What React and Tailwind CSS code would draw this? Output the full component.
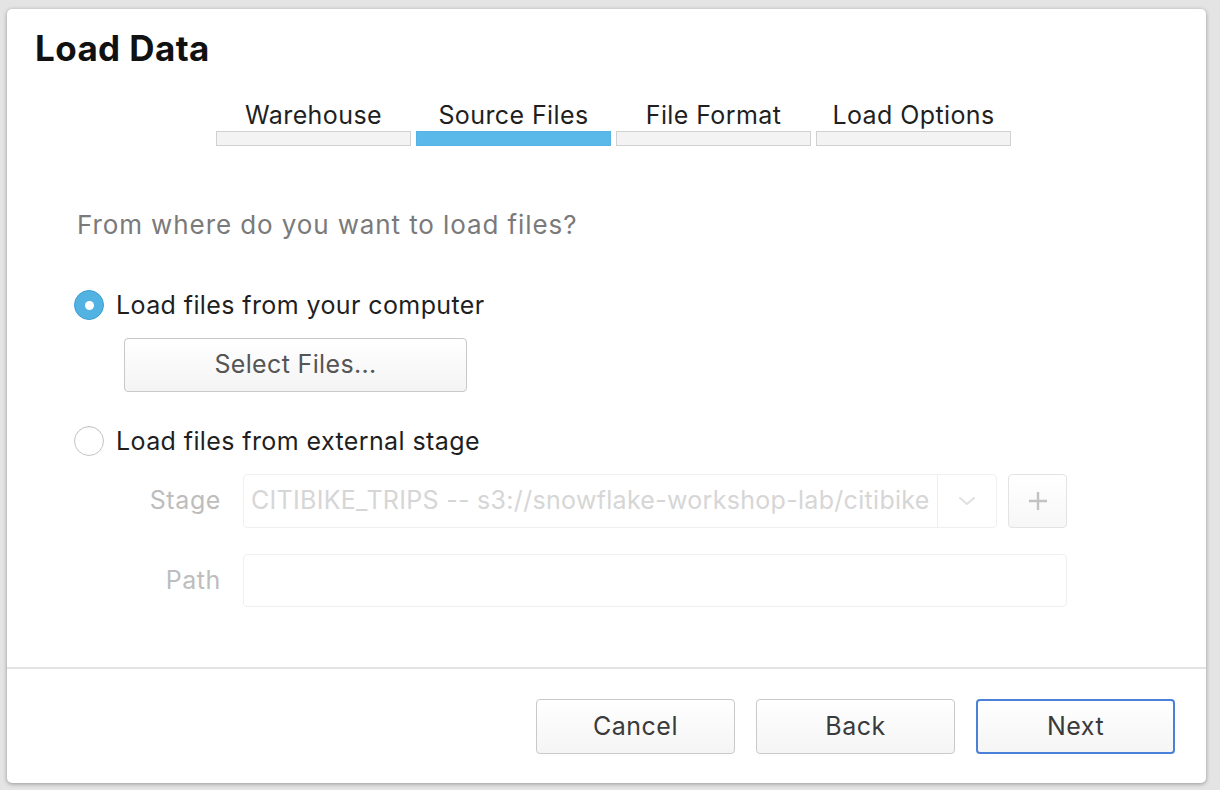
import React from "react";

const font = { fontFamily: "Inter, 'Noto Sans', sans-serif" };

function Tab({ label, active }) {
  return (
    <div className="flex w-[195px] flex-col items-center">
      <div className="h-[30px] text-[25px] leading-[30px] tracking-[0.4px] text-[#1f1f1f]">{label}</div>
      <div
        className={
          "mt-[1px] h-[15px] w-full border " +
          (active ? "border-[#55b3e5] bg-[#5bb9e9]" : "border-[#d0d0d0] bg-[#f3f3f3]")
        }
      />
    </div>
  );
}

function Radio({ checked }) {
  return checked ? (
    <div className="flex h-[30px] w-[30px] items-center justify-center rounded-full border border-[#3f9fd0] bg-[#52b2e2]">
      <div className="h-[9px] w-[9px] rounded-full bg-white" />
    </div>
  ) : (
    <div className="h-[30px] w-[30px] rounded-full border border-[#c4c4c4] bg-white shadow-[inset_0_1px_1px_rgba(0,0,0,0.05)]" />
  );
}

function FooterButton({ label, primary }) {
  return (
    <div
      className={
        "flex h-[55px] w-[199px] items-center justify-center rounded-[4px] bg-gradient-to-b from-[#ffffff] to-[#f5f5f5] text-[25px] tracking-[0.5px] text-[#3a3a3a] " +
        (primary ? "border-2 border-[#4a80d8]" : "border border-[#c9c9c9]")
      }
    >
      {label}
    </div>
  );
}

export default function App() {
  return (
    <div className="h-[790px] w-[1220px] overflow-hidden bg-[#e4e4e4] pl-[7px] pt-[9px]" style={font}>
      <div className="flex h-[774px] w-[1199px] flex-col rounded-[5px] bg-white shadow-[0_1px_4px_rgba(0,0,0,0.35)]">
        <div className="h-[40px] pl-[28px] pt-0 mt-[19px] text-[35px] font-bold leading-[40px] tracking-[0.4px] text-[#111]">
          Load Data
        </div>

        <div className="ml-[209px] mt-[32px] flex gap-[5px]">
          <Tab label="Warehouse" />
          <Tab label="Source Files" active />
          <Tab label="File Format" />
          <Tab label="Load Options" />
        </div>

        <div className="ml-[70px] mt-[62px] h-[34px] text-[26px] leading-[34px] tracking-[0.9px] text-[#7a7a7a]">
          From where do you want to load files?
        </div>

        <div className="ml-[67px] mt-[47px] flex h-[32px] items-center gap-[12px]">
          <Radio checked />
          <span className="text-[25px] leading-[32px] tracking-[0.4px] text-[#1f1f1f]">Load files from your computer</span>
        </div>

        <div className="ml-[117px] mt-[17px] flex h-[54px] w-[343px] items-center justify-center rounded-[4px] border border-[#c8c8c8] bg-gradient-to-b from-[#ffffff] to-[#f4f4f4] text-[25px] tracking-[0.35px] text-[#555]">
          Select Files...
        </div>

        <div className="ml-[67px] mt-[33px] flex h-[32px] items-center gap-[12px]">
          <Radio />
          <span className="text-[25px] leading-[32px] tracking-[0.4px] text-[#1f1f1f]">Load files from external stage</span>
        </div>

        <div className="ml-[117px] mt-[17px] flex items-center">
          <div className="w-[97px] text-right text-[25px] tracking-[0.6px] text-[#bdbdbd]">Stage</div>
          <div className="ml-[22px] flex h-[54px] w-[754px] items-stretch overflow-hidden rounded-[4px] border border-[#efefef] bg-white">
            <div className="flex min-w-0 flex-1 items-center overflow-hidden whitespace-nowrap pl-[7px] text-[25px] tracking-[0.3px] text-[#d6d6d6]">
              CITIBIKE_TRIPS -- s3://snowflake-workshop-lab/citibike
            </div>
            <div className="flex w-[59px] shrink-0 items-center justify-center border-l border-[#efefef]">
              <svg width="20" height="12" viewBox="0 0 20 12" fill="none">
                <path d="M3 3l7 6 7-6" stroke="#e0e0e0" strokeWidth="2" strokeLinecap="round" strokeLinejoin="round" />
              </svg>
            </div>
          </div>
          <div className="ml-[11px] flex h-[54px] w-[59px] items-center justify-center rounded-[4px] border border-[#e3e3e3] bg-gradient-to-b from-[#ffffff] to-[#f7f7f7]">
            <svg width="22" height="22" viewBox="0 0 22 22" fill="none">
              <path d="M11 2v18M2 11h18" stroke="#c2c2c2" strokeWidth="2.4" />
            </svg>
          </div>
        </div>

        <div className="ml-[117px] mt-[26px] flex items-center">
          <div className="w-[97px] text-right text-[25px] tracking-[0.6px] text-[#bdbdbd]">Path</div>
          <div className="ml-[22px] h-[53px] w-[824px] rounded-[4px] border border-[#efefef] bg-white" />
        </div>

        <div className="mt-[60px] h-[2px] w-full bg-[#e3e3e3]" />

        <div className="mt-[30px] flex justify-end gap-[21px] pr-[31px]">
          <FooterButton label="Cancel" />
          <FooterButton label="Back" />
          <FooterButton label="Next" primary />
        </div>
      </div>
    </div>
  );
}
